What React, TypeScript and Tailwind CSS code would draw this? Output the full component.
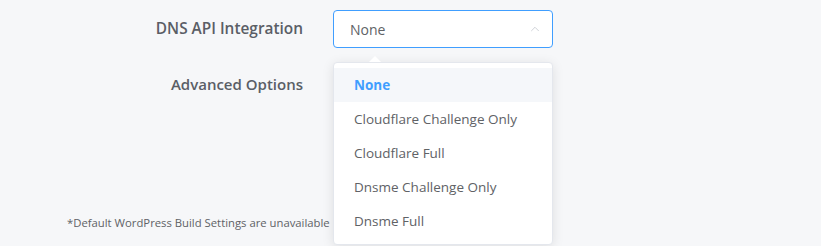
import { ChevronUp } from 'lucide-react'

const options = [
  'None',
  'Cloudflare Challenge Only',
  'Cloudflare Full',
  'Dnsme Challenge Only',
  'Dnsme Full',
]

const App = () => {
  const selected = 'None'

  return (
    <div
      className="w-[821px] h-[246px] bg-[#f6f7f9] pt-[10px] text-[#606266] overflow-hidden"
      style={{ fontFamily: '"Open Sans", "Noto Sans", sans-serif' }}
    >
      {/* DNS API row */}
      <div className="flex items-center h-[38px]">
        <label className="w-[303px] text-right text-[15.4px] font-semibold text-[#5a5e66]">
          DNS API Integration
        </label>
        <div className="relative ml-[30px] w-[220px]">
          <div className="flex items-center justify-between h-[38px] pl-[16px] pr-[10px] bg-white border border-[#409eff] rounded-[4px]">
            <span className="text-[14px] text-[#606266]">{selected}</span>
            <ChevronUp className="h-[14px] w-[14px] text-[#c0c4cc]" strokeWidth={1.3} />
          </div>

          {/* Dropdown */}
          <div className="absolute left-0 top-[52px] w-[220px] z-10">
            <div className="absolute -top-[6px] left-[36px] w-0 h-0 border-l-[6px] border-r-[6px] border-b-[6px] border-l-transparent border-r-transparent border-b-white" />
            <div className="bg-white rounded-[4px] border border-[#e4e7ed] shadow-[0_2px_12px_0_rgba(0,0,0,0.1)] pt-[5px] pb-[6px]">
              {options.map((opt) => (
                <div
                  key={opt}
                  className={
                    opt === selected
                      ? 'h-[34px] flex items-center px-[20px] text-[13.5px] font-bold text-[#409eff] bg-[#f5f7fa]'
                      : 'h-[34px] flex items-center px-[20px] text-[13.5px] text-[#606266]'
                  }
                >
                  {opt}
                </div>
              ))}
            </div>
          </div>
        </div>
      </div>

      {/* Advanced options row */}
      <div className="flex items-center h-[38px] mt-[17px]">
        <label className="w-[303px] text-right text-[15px] font-semibold text-[#5a5e66]">
          Advanced Options
        </label>
      </div>

      <p className="mt-[112px] pl-[67px] text-[11.3px] text-[#606266]">
        *Default WordPress Build Settings are unavailable
      </p>
    </div>
  )
}

export default App
